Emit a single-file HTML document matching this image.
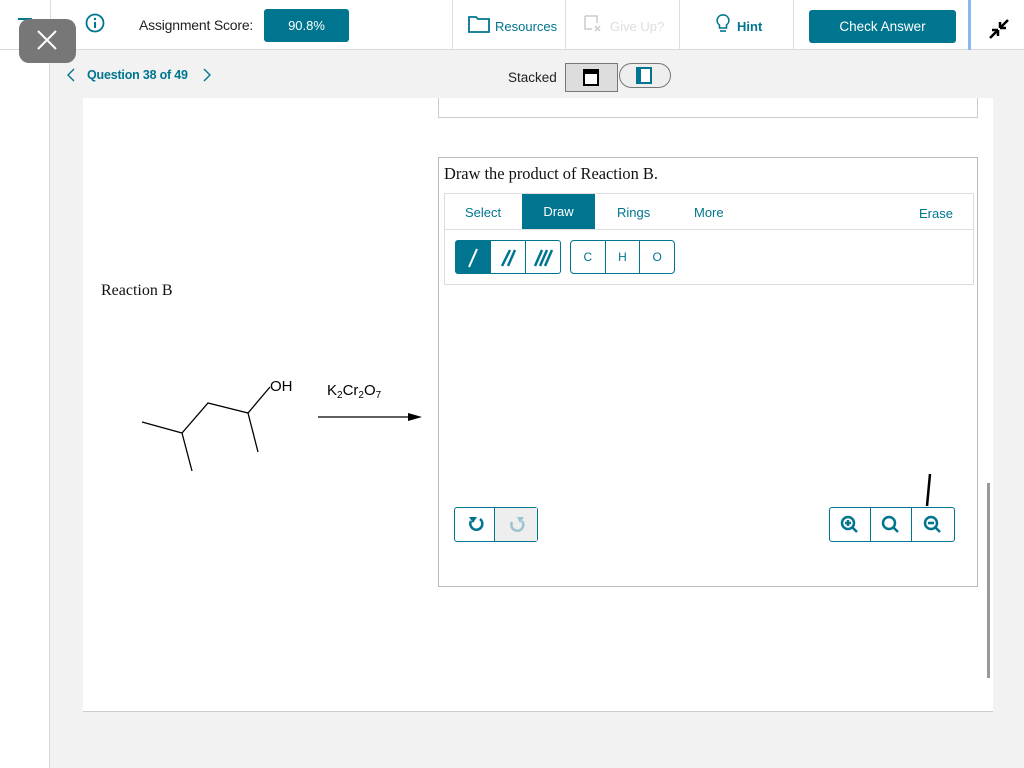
<!DOCTYPE html>
<html><head><meta charset="utf-8"><style>
*{box-sizing:border-box;margin:0;padding:0}
body{width:1024px;height:768px;overflow:hidden;background:#f2f2f2;font-family:"Liberation Sans",sans-serif;position:relative}
.abs{position:absolute}
.teal{color:#00758f}
</style></head><body>
<div class="abs" style="left:0;top:0;width:1024px;height:50px;background:#fff;border-bottom:1px solid #d9d9d9"></div>
<div class="abs" style="left:0;top:50px;width:50px;height:718px;background:#fff;border-right:1px solid #d9d9d9"></div>
<div class="abs" style="left:50px;top:0;width:1px;height:50px;background:#ddd"></div>
<div class="abs" style="left:18px;top:18px;width:14px;height:2px;background:#00758f"></div>
<div class="abs" style="left:19px;top:19px;width:57px;height:44px;background:#777;border-radius:10px"></div>
<svg class="abs" style="left:36px;top:29px" width="22" height="22"><path d="M2 2L20 20M20 2L2 20" stroke="#fff" stroke-width="2"/></svg>
<svg class="abs" style="left:85px;top:13px" width="20" height="20"><circle cx="10" cy="10" r="8.5" fill="none" stroke="#00758f" stroke-width="1.8"/><rect x="9" y="9" width="2" height="6" fill="#00758f"/><circle cx="10" cy="6" r="1.2" fill="#00758f"/></svg>
<div class="abs" style="left:139px;top:17px;font-size:14px;color:#222;letter-spacing:-0.2px">Assignment Score:</div>
<div class="abs" style="left:264px;top:9px;width:85px;height:33px;background:#00758f;border-radius:3px;color:#fff;font-size:13px;text-align:center;line-height:33px">90.8%</div>
<div class="abs" style="left:452px;top:0;width:1px;height:50px;background:#ddd"></div>
<svg class="abs" style="left:468px;top:15px" width="22" height="18"><path d="M1 2H8L10 4H21V17H1Z" fill="none" stroke="#00758f" stroke-width="1.8"/></svg>
<div class="abs teal" style="left:495px;top:19px;font-size:13px">Resources</div>
<div class="abs" style="left:565px;top:0;width:1px;height:50px;background:#ddd"></div>
<svg class="abs" style="left:584px;top:15px" width="20" height="18"><path d="M1 1H13V8M1 1V14H8" fill="none" stroke="#ccc" stroke-width="1.5"/><path d="M11 11L16 16M16 11L11 16" stroke="#ccc" stroke-width="1.5"/></svg>
<div class="abs" style="left:610px;top:19px;font-size:13px;color:#ddd">Give Up?</div>
<div class="abs" style="left:679px;top:0;width:1px;height:50px;background:#ddd"></div>
<svg class="abs" style="left:716px;top:14px" width="14" height="20"><path d="M7 1A5.5 5.5 0 0 0 3.5 11V14H10.5V11A5.5 5.5 0 0 0 7 1Z" fill="none" stroke="#00758f" stroke-width="1.6"/><path d="M4 17H10" stroke="#00758f" stroke-width="1.6"/></svg>
<div class="abs teal" style="left:737px;top:19px;font-size:13px;font-weight:bold">Hint</div>
<div class="abs" style="left:793px;top:0;width:1px;height:50px;background:#ddd"></div>
<div class="abs" style="left:809px;top:10px;width:147px;height:33px;background:#00758f;border-radius:3px;color:#fff;font-size:13.5px;text-align:center;line-height:33px">Check Answer</div>
<div class="abs" style="left:968px;top:0;width:3px;height:50px;background:#8cb8ef"></div>
<svg class="abs" style="left:988px;top:18px" width="24" height="22"><path d="M12 10L20 2M12 10H18M12 10V4" stroke="#000" stroke-width="2.5" fill="none"/><path d="M10 12L2 20M10 12H4M10 12V18" stroke="#000" stroke-width="2.5" fill="none"/></svg>
<svg class="abs" style="left:66px;top:68px" width="10" height="14"><path d="M8 1L2 7L8 13" fill="none" stroke="#00758f" stroke-width="1.4"/></svg>
<div class="abs teal" style="left:87px;top:68px;font-size:12.5px;font-weight:bold;letter-spacing:-0.2px">Question 38 of 49</div>
<svg class="abs" style="left:202px;top:68px" width="10" height="14"><path d="M2 1L8 7L2 13" fill="none" stroke="#00758f" stroke-width="1.4"/></svg>
<div class="abs" style="left:508px;top:70px;font-size:13.5px;color:#222">Stacked</div>
<div class="abs" style="left:565px;top:63px;width:53px;height:29px;background:#ddd;border:1px solid #777"></div>
<div class="abs" style="left:583px;top:69px;width:16px;height:17px;border:2px solid #000;border-top-width:5px;background:#fff"></div>
<div class="abs" style="left:619px;top:63px;width:52px;height:25px;border:1px solid #777;border-radius:13px;background:#eee"></div>
<div class="abs" style="left:636px;top:67px;width:16px;height:17px;border:2px solid #00758f;border-left-width:5px;background:#fff"></div>
<div class="abs" style="left:83px;top:98px;width:910px;height:614px;background:#fff;border-bottom:1px solid #ccc"></div>
<div class="abs" style="left:438px;top:98px;width:540px;height:20px;border:1px solid #ccc;border-top:none"></div>
<div class="abs" style="left:101px;top:282px;font-family:'Liberation Serif',serif;font-size:16px;color:#111">Reaction B</div>
<svg class="abs" style="left:130px;top:370px" width="300" height="110">
<path d="M12 52L52 63L78 33L118 43L140 17M118 43L128 82M52 63L62 101" stroke="#000" stroke-width="1.3" fill="none"/>
<text x="140" y="21" font-family="Liberation Sans" font-size="15">OH</text>
<text x="197" y="25" font-family="Liberation Sans" font-size="15">K<tspan font-size="10" dy="3">2</tspan><tspan dy="-3">Cr</tspan><tspan font-size="10" dy="3">2</tspan><tspan dy="-3">O</tspan><tspan font-size="10" dy="3">7</tspan></text>
<path d="M188 47H282" stroke="#000" stroke-width="1.2"/><path d="M292 47L278 43V51Z" fill="#000"/>
</svg>
<div class="abs" style="left:438px;top:157px;width:540px;height:430px;border:1px solid #bbb;background:#fff"></div>
<div class="abs" style="left:444px;top:164px;font-family:'Liberation Serif',serif;font-size:16.4px;color:#111">Draw the product of Reaction B.</div>
<div class="abs" style="left:444px;top:193px;width:530px;height:92px;border:1px solid #ddd"></div>
<div class="abs" style="left:444px;top:229px;width:530px;height:1px;background:#ddd"></div>
<div class="abs teal" style="left:465px;top:205px;font-size:13px">Select</div>
<div class="abs" style="left:522px;top:194px;width:73px;height:35px;background:#00758f;color:#fff;font-size:13px;text-align:center;line-height:35px">Draw</div>
<div class="abs teal" style="left:617px;top:205px;font-size:13px">Rings</div>
<div class="abs teal" style="left:694px;top:205px;font-size:13px">More</div>
<div class="abs teal" style="left:919px;top:206px;font-size:13px">Erase</div>
<div class="abs" style="left:455px;top:240px;width:106px;height:34px;border:1px solid #00758f;border-radius:3px;display:flex">
<div style="width:35px;background:#00758f;border-right:1px solid #00758f"></div><div style="width:35px;border-right:1px solid #00758f"></div></div>
<svg class="abs" style="left:455px;top:240px" width="106" height="34"><path d="M14 27L22 9" stroke="#fff" stroke-width="2"/><path d="M47 26L55 10M53 26L60 10" stroke="#00758f" stroke-width="2.5"/><path d="M80 26L87 10M85 26L92 10M90 26L97 10" stroke="#00758f" stroke-width="2.5"/></svg>
<div class="abs teal" style="left:570px;top:240px;width:105px;height:34px;border:1px solid #00758f;border-radius:4px;display:flex;font-size:12px;line-height:32px;text-align:center">
<div style="flex:1;border-right:1px solid #00758f">C</div><div style="flex:1;border-right:1px solid #00758f">H</div><div style="flex:1">O</div></div>
<div class="abs" style="left:454px;top:507px;width:84px;height:35px;border:1px solid #00758f;border-radius:3px;display:flex">
<div style="width:40px;border-right:1px solid #00758f"></div><div style="flex:1;background:#eee"></div></div>
<svg class="abs" style="left:454px;top:507px" width="84" height="35"><path d="M17 14A6 6 0 1 0 26 12" fill="none" stroke="#00758f" stroke-width="2.5"/><path d="M15 10L23 10L19 16Z" fill="#00758f"/><path d="M68 14A6 6 0 1 1 58 15" fill="none" stroke="#9cc4cf" stroke-width="2.5"/><path d="M70 10L63 10L66 16Z" fill="#9cc4cf"/></svg>
<div class="abs" style="left:829px;top:507px;width:126px;height:35px;border:1px solid #00758f;border-radius:3px;display:flex">
<div style="width:41px;border-right:1px solid #00758f"></div><div style="width:41px;border-right:1px solid #00758f"></div></div>
<svg class="abs" style="left:829px;top:507px" width="126" height="35"><g stroke="#00758f" stroke-width="2.5" fill="none"><circle cx="19" cy="16" r="6"/><path d="M23 20L28 25M16 16H22M19 13V19"/><circle cx="60" cy="16" r="6"/><path d="M64 20L69 25"/><circle cx="102" cy="16" r="6"/><path d="M106 20L111 25M99 16H105"/></g></svg>
<svg class="abs" style="left:920px;top:472px" width="14" height="36"><path d="M10 2L7 34" stroke="#000" stroke-width="2.5"/></svg>
<div class="abs" style="left:987px;top:483px;width:3px;height:195px;background:#999"></div>
</body></html>
